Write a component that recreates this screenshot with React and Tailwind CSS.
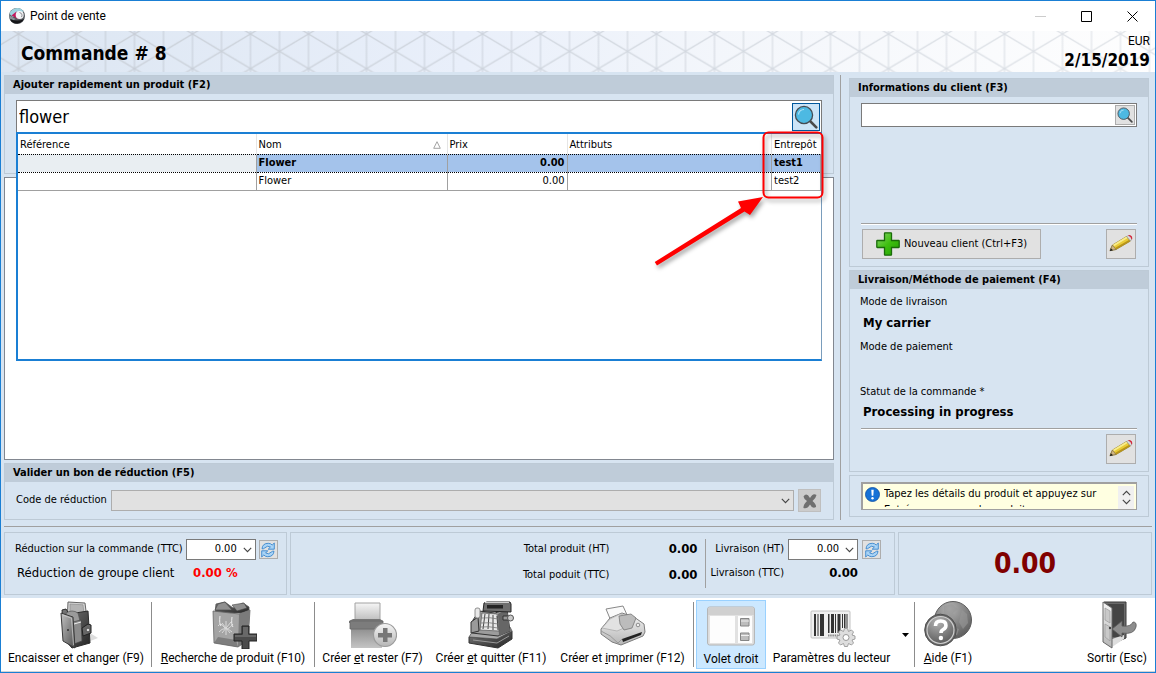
import React from "react";

const SANS = "font-['DejaVu_Sans_Condensed','Liberation_Sans',sans-serif]";
const UI = "font-['Roboto','Noto_Sans',sans-serif]";

function Logo() {
  return (
    <svg className="size-4" viewBox="0 0 16 16" aria-hidden="true">
      <circle cx="8" cy="8" r="8" fill="#55595e" />
      <path d="M.5 6A7.800 7.800 0 0 1 14.500 3.500L8 6 4 9z" fill="#9ed3df" />
      <path d="M.1 7A8 8 0 0 0 3 13.200L6.500 11z" fill="#8b9399" />
      <path d="M2.500 7.500 7.500 3.500 9 11z" fill="#c2185b" />
      <circle cx="10.700" cy="7" r="4" fill="#f3f3f5" />
      <path d="M10.500 4.500a3 3 0 0 1 2 4.600" stroke="#8a8a90" strokeWidth="1" fill="none" />
      <path d="M1.500 11q6.500 3 13.500 0A8 8 0 0 1 1.500 12.500z" fill="#151518" />
    </svg>
  );
}

function HeaderPattern() {
  return (
    <svg className="absolute inset-0 h-full w-full" aria-hidden="true">
      <defs>
        <linearGradient id="hdr">
          <stop offset="0" stopColor="#dce6f2" />
          <stop offset="0.4" stopColor="#e9effa" />
          <stop offset="0.62" stopColor="#f3f6fb" />
          <stop offset="1" stopColor="#fefefe" />
        </linearGradient>
        <linearGradient id="fade">
          <stop offset="0" stopColor="#fff" />
          <stop offset="1" stopColor="#888" />
        </linearGradient>
        <mask id="fadeMask">
          <rect width="100%" height="100%" fill="url(#fade)" />
        </mask>
        <pattern id="tri" width="58" height="34.6" patternUnits="userSpaceOnUse" patternTransform="translate(17.5 3)">
          <path d="M0 0 58 34.600M58 0 0 34.600" stroke="#c8ced6" strokeWidth="1.300" />
          <path d="M29 0V35M0 0V35M58 0V35" stroke="#c3cad3" strokeWidth="1" />
        </pattern>
      </defs>
      <rect width="100%" height="100%" fill="url(#hdr)" />
      <g mask="url(#fadeMask)">
        <rect width="100%" height="100%" fill="url(#tri)" />
      </g>
    </svg>
  );
}

function Magnifier({ className }) {
  return (
    <svg className={className} viewBox="0 0 24 24" aria-hidden="true">
      <path d="m16 16 6.300 6.300" stroke="#4a4a4a" strokeWidth="2.600" strokeLinecap="round" />
      <circle cx="10" cy="10" r="8.600" fill="#4db9e2" stroke="#454b52" strokeWidth="1.300" />
      <path d="M4.500 9.500A5.600 5.600 0 0 1 10 4.500" stroke="#b5e4f7" strokeWidth="1.200" fill="none" />
    </svg>
  );
}

function Plus() {
  return (
    <svg className="size-6" viewBox="0 0 24 24" aria-hidden="true">
      <defs>
        <linearGradient id="plusG" x1="0" y1="0" x2="1" y2="1">
          <stop offset="0" stopColor="#8ad46f" />
          <stop offset="0.5" stopColor="#3fbf10" />
          <stop offset="1" stopColor="#1f9c00" />
        </linearGradient>
      </defs>
      <path d="M9 .8h6q.5 0 .5.500V8.500h7.200q.5 0 .5.500v6q0 .5-.5.500h-7.200v7.200q0 .5-.5.500H9q-.5 0-.5-.5V15.500H1.300q-.5 0-.5-.5V9q0-.5.5-.5h7.200V1.300q0-.5.500-.5z" fill="url(#plusG)" stroke="#1a6b0a" strokeWidth="1.300" />
    </svg>
  );
}

function Pencil() {
  return (
    <svg className="h-5 w-6" viewBox="0 0 24 20" aria-hidden="true">
      <path d="M1 16.500 3.500 11 17.500 2.500 21.500 7 7 15.500z" fill="#e9cb35" stroke="#8f7a2a" strokeWidth=".8" />
      <path d="M3.500 11 17.500 2.500 18.800 4 5 12.300z" fill="#f8ec8c" />
      <path d="M7 15.500 21.500 7 20.300 5.700 6 14z" fill="#b8941a" />
      <path d="M1 16.500 3.500 11 7 15.500z" fill="#cfb583" stroke="#7a6840" strokeWidth=".6" />
      <path d="M.8 17.200 1.900 14.200 4 16.300z" fill="#222" />
      <path d="m17.500 2.500 2-.9q3.500.4 3.500 3.400L21.500 7z" fill="#d9d9d9" stroke="#888" strokeWidth=".5" />
      <path d="m18.900 1.600 1.600-.5q3 .5 2.700 3.500l-1 1.200q.3-3-3.300-4.200z" fill="#d4263c" />
    </svg>
  );
}

function Refresh() {
  return (
    <svg className="size-4" viewBox="0 0 16 16" aria-hidden="true">
      <path d="M2 6.800Q2.500 1.300 8.300 1.300q2.300 0 3.900 1.700L14.300 1v6.200H8.200l2.200-2.200Q7.300 3 4.800 5.900 3.500 7.200 2 6.800z" fill="#a9d3f5" stroke="#2b7cc9" strokeWidth=".8" />
      <path d="M14 9.200Q13.500 14.700 7.700 14.700q-2.300 0-3.900-1.700L1.700 15V8.800h6.100L5.600 11q3.100 2 5.600-.9 1.300-1.300 2.800-.9z" fill="#a9d3f5" stroke="#2b7cc9" strokeWidth=".8" />
    </svg>
  );
}

function Chevron({ className }) {
  return (
    <svg className={className} viewBox="0 0 9 6" aria-hidden="true">
      <path d="m.8.800 3.700 3.900L8.200.800" fill="none" stroke="#444" strokeWidth="1.100" />
    </svg>
  );
}

/* Shared gradients for the grey toolbar drawings */
function Defs() {
  return (
    <svg className="absolute size-0" aria-hidden="true">
      <defs>
        <linearGradient id="g1" x1="0" y1="0" x2="1" y2="1">
          <stop offset="0" stopColor="#c2c2c2" />
          <stop offset="1" stopColor="#505050" />
        </linearGradient>
        <linearGradient id="g2" x1="0" y1="0" x2="0" y2="1">
          <stop offset="0" stopColor="#f6f6f6" />
          <stop offset="1" stopColor="#b5b5b5" />
        </linearGradient>
        <linearGradient id="g3" x1="0" y1="0" x2="1" y2="1">
          <stop offset="0" stopColor="#7a7a7a" />
          <stop offset="1" stopColor="#242424" />
        </linearGradient>
        <radialGradient id="g4" cx=".4" cy=".2" r=".9">
          <stop offset="0" stopColor="#b2b2b2" />
          <stop offset="1" stopColor="#555" />
        </radialGradient>
        <linearGradient id="g5" x1="0" y1="0" x2="0" y2="1">
          <stop offset="0" stopColor="#8e8e8e" />
          <stop offset="1" stopColor="#c4c4c4" />
        </linearGradient>
      </defs>
    </svg>
  );
}

const ICON = "h-12 w-12";

const Wallet = () => (
  <svg className={ICON} viewBox="0 0 48 48" aria-hidden="true">
    <path d="M28 44 46 37 38 32z" fill="#ddd" />
    <path d="m16 1 17 1 2 16-20 4z" fill="#d5d5d5" stroke="#666" />
    <path d="m18 3 13 .8 1 9-14 1z" fill="#b3b3b3" stroke="#888" strokeWidth=".6" />
    <path d="m10 9 4-1 3 5 19-3 2 32-18 5-7-8z" fill="url(#g3)" stroke="#2b2b2b" />
    <path d="M14 12q6-4 12 0l2 8-12 4z" fill="#9a9a9a" stroke="#555" strokeWidth=".7" />
    <path d="m21 21 8-2 1 21-8 3z" fill="#8b8b8b" stroke="#444" strokeWidth=".7" />
    <path d="m22 23 7-2" stroke="#eee" />
    <path d="m9 12 12 4 2 31-12-7z" fill="url(#g1)" stroke="#3a3a3a" />
    <path d="m11 14 8.500 3.200 2 27" stroke="#d2d2d2" strokeWidth=".7" fill="none" />
    <circle cx="16" cy="29" r="1" fill="#333" />
    <path d="m30 27 6-4 3 1v8l-8 3z" fill="#666" stroke="#222" />
    <circle cx="36" cy="29" r="1.800" fill="#ddd" stroke="#333" strokeWidth=".6" />
  </svg>
);

const Bag = () => (
  <svg className={ICON} viewBox="0 0 48 48" aria-hidden="true">
    <path d="m7 3 9-2 8 6 10-5 6 4v6H6z" fill="url(#g3)" stroke="#555" strokeWidth=".8" />
    <path d="m9 3 7-2 7 8H6zM23 4l12-2 3 5-10 3z" fill="#8f8f8f" stroke="#444" strokeWidth=".6" />
    <path d="m4 10 26 3 11-4-2 30-10 7-24-4z" fill="#a4a4a4" stroke="#666" strokeWidth=".8" />
    <path d="m30 13 11-4-2 30-10 7z" fill="#7b7b7b" />
    <path d="m5 42 4-6 18 3 2 7z" fill="#666" opacity=".6" />
    <path d="M9 25q3-4 6 1t9-3M10 31q6-7 13 0M13 22l8 10M22 21l-9 11M17 20v14" stroke="#d9d9d9" strokeWidth="1" fill="none" />
    <path d="M11 15q-1 8 1 10M23 16q-1 8 1 10" stroke="#efefef" strokeWidth="1" fill="none" />
    <path d="M33 25h7v8h8v7h-8v8h-7v-8h-8v-7h8z" fill="#4b4b4b" stroke="#222" />
    <path d="M34 26h5v8h8v2H26v-2h8z" fill="#7b7b7b" opacity=".6" />
  </svg>
);

const SaveStay = () => (
  <svg className={ICON} viewBox="0 0 48 48" aria-hidden="true">
    <path d="M6 2h25v20H6z" fill="url(#g2)" stroke="#a2a2a2" />
    <path d="m0 20 4-2h27l3 2v2H0z" fill="#777" />
    <path d="M2 27h31v20H2z" fill="url(#g5)" />
    <path d="M1 20h33v8H1z" fill="#7c7c7c" stroke="#686868" strokeWidth=".8" />
    <circle cx="36" cy="34" r="11.500" fill="url(#g2)" stroke="#9b9b9b" strokeWidth="1.200" />
    <path d="M34 27h4.500v5H43v4.500h-4.500V41H34v-4.500h-5V32h5z" fill="#777" />
  </svg>
);

const Register = () => (
  <svg className={ICON} viewBox="0 0 48 48" aria-hidden="true">
    <path d="m2 36 28 2 15-8v8L31 47 2 42z" fill="url(#g3)" stroke="#333" />
    <path d="m2 36 5-8 36-2 2 4-15 8z" fill="#a9a9a9" stroke="#555" strokeWidth=".8" />
    <path d="m12 10 16 2 12-4 3 22-12 5-26-3 1-13z" fill="#9c9c9c" stroke="#333" />
    <path d="m31 13 9-5 3 22-11 5z" fill="#666" />
    <path d="m17 2 3-1h23l1 2v8l-28-1z" fill="#6f6f6f" stroke="#252525" />
    <path d="M20 4h16v3.500H20z" fill="#252525" />
    <path d="M18 1.500h24" stroke="#cfcfcf" />
    <path d="m15 12 15 1 2 17-19-1z" fill="#e8e8e8" stroke="#555" strokeWidth=".7" />
    <path d="m18 13-2 15m6-15-1 15m5-14v15m4-14 1 14" stroke="#444" strokeWidth="1" />
    <path d="M15 17q8-1 16 1M14 22q8-1 17 1M13 26q9-1 18 1" stroke="#777" strokeWidth=".8" fill="none" />
    <path d="m4 21 7-5 1 14-8 2z" fill="#9a9a9a" stroke="#333" />
    <rect x="8" y="7" width="5" height="10" rx="2" fill="#e8e8e8" stroke="#777" strokeWidth=".8" />
    <path d="M36 15h8v4h-8z" fill="#999" stroke="#333" />
    <circle cx="43.500" cy="17" r="3" fill="#c9c9c9" stroke="#555" />
    <path d="m6 39 24 3 12-7" stroke="#9a9a9a" fill="none" />
  </svg>
);

const Printer = () => (
  <svg className={ICON} viewBox="0 0 48 48" aria-hidden="true">
    <path d="m7 8 17-3 5 11-17 4z" fill="#fafafa" stroke="#888" />
    <path d="m2 28 9-11 12-5 12 4 10 7 1 8-2 4-22 9-9-3L2 33z" fill="url(#g2)" stroke="#7d7d7d" />
    <path d="m11 18 10-5 12 3-1 8-14 6-15-3z" fill="#e2e2e2" stroke="#a5a5a5" strokeWidth=".7" />
    <path d="m20 15 12-2 5 4-4 10-8 2-4-6z" fill="#bcbcbc" stroke="#777" strokeWidth=".8" />
    <path d="m23 38 20-7-1 3-18 7z" fill="#222" />
    <path d="M2 30q10 4 17 12l4-4" stroke="#999" fill="none" />
    <circle cx="39" cy="24" r="1.800" fill="#eee" stroke="#777" strokeWidth=".8" />
  </svg>
);

const RightPane = () => (
  <svg className={ICON} viewBox="0 0 48 48" aria-hidden="true">
    <rect x=".6" y="5" width="46.800" height="38" rx="2" fill="#e1e1e1" stroke="#b2b2b2" />
    <path d="M1 13V7q0-2 2-2h42q2 0 2 2v6z" fill="#d0d0d0" />
    <path d="M3 14h25v27H3zM31 14h14v27H31z" fill="#fdfdfd" />
    <path d="M33.500 16.500h8.500v7.500h-8.500zM33.500 31h8.500v7.500h-8.500z" fill="#bdbdbd" stroke="#858585" />
    <path d="M34 19h8M34 33.500h8" stroke="#efefef" />
  </svg>
);

const Barcode = () => (
  <svg className={ICON} viewBox="0 0 48 48" aria-hidden="true">
    <rect x="3" y="10" width="39" height="27" rx="1" fill="#f0f0f0" stroke="#c2c2c2" />
    <path d="M6 13h2v22H6zM9.500 13h1v22h-1zM12 13h4v22h-4zM20 13h1.500v19H20zM23 13h3v19h-3zM27 13h1v19h-1zM29.500 13h3v19h-3zM34 13h1v14h-1zM36 13h1.500v14H36zM38.500 13h1v14h-1z" fill="#343434" />
    <path d="M20 34.500h13" stroke="#888" strokeWidth="2" strokeDasharray="1.500 .7" />
    <path d="m35.500 30.500 1-3h3l1 3 3-1.500 2 2-1.500 3 3 1v3l-3 1 1.500 3-2 2-3-1.500-1 3h-3l-1-3-3 1.500-2-2 1.500-3-3-1v-3l3-1-1.500-3 2-2z" fill="#dedede" stroke="#999" strokeWidth=".9" />
    <circle cx="38" cy="36.500" r="3" fill="#fff" stroke="#999" />
  </svg>
);

const Help = () => (
  <svg className={ICON} viewBox="0 0 48 48" aria-hidden="true">
    <circle cx="29" cy="19" r="18.500" fill="url(#g4)" stroke="#5c5c5c" />
    <path d="m20 5 8-2 6 5-5 4 2 5-6 3-5-6zM38 9l5 4 1 9-5 6-4-7zM29 26l6 2-2 6-5-1z" fill="#989898" opacity=".6" />
    <circle cx="16.500" cy="29" r="15.800" fill="#686868" stroke="#4f4f4f" />
    <circle cx="16.500" cy="29" r="13.500" fill="url(#g4)" stroke="#cfcfcf" strokeWidth="1.200" />
    <path d="M11.500 25q0-5 5.200-5t5.200 4.500q0 2.500-2.700 4-2.200 1.200-2.200 3.500" stroke="#fff" strokeWidth="3.600" fill="none" />
    <circle cx="16.900" cy="37" r="2.200" fill="#fff" />
  </svg>
);

const Exit = () => (
  <svg className={ICON} viewBox="0 0 48 48" aria-hidden="true">
    <path d="M11 1h22v36l-14 6z" fill="#6a6a6a" stroke="#3a3a3a" />
    <path d="M14 3h17v33H18z" fill="#454545" />
    <path d="m19 38 12-4v4l-12 8z" fill="#dedede" />
    <path d="m10 1 9 6v40l-9-6z" fill="url(#g2)" stroke="#666" />
    <path d="m12 7 5 3v12l-5-3zM12 23l5 3v14l-5-4z" fill="#c9c9c9" stroke="#999" strokeWidth=".7" />
    <circle cx="17" cy="27" r="1.200" fill="#444" />
    <path d="m19 28 10-8v5q9 1 11-4 4 0 3 5-2 8-14 6v4z" fill="#8d8d8d" stroke="#5b5b5b" strokeWidth=".8" />
  </svg>
);

function Panel({ title, children, className = "" }) {
  return (
    <section className={`flex flex-col border border-[#bdcad6] ${className}`}>
      {title && (
        <h2 className="h-[18px] bg-[#bfccd9] px-2 text-[11px] leading-[18px] font-bold whitespace-nowrap">{title}</h2>
      )}
      {children}
    </section>
  );
}

const SQUARE = "flex shrink-0 items-center justify-center border border-[#adadad] bg-[#e1e1e1]";

function Amount({ id }) {
  return (
    <div className="relative">
      <select id={id} className="block h-[21px] w-[70px] appearance-none border border-[#7a7a7a] bg-white pr-[18px] text-[11px] outline-none [text-align-last:right]">
        <option>0.00</option>
      </select>
      <Chevron className="pointer-events-none absolute top-2 right-1 h-[6px] w-[9px]" />
    </div>
  );
}

const Rule = () => <div className="h-[2px] border-t border-[#a0a0a0] bg-white" />;

function Tool({ icon, children, className = "" }) {
  return (
    <button className={`flex shrink-0 flex-col items-center justify-end pb-1 whitespace-nowrap ${className}`}>
      {icon}
      <span className="leading-[18px]">{children}</span>
    </button>
  );
}

const Sep = ({ className = "" }) => <div className={`my-1 w-px shrink-0 bg-[#8c8c8c] ${className}`} />;

const CELL = "border-r border-[#a0a0a0]";
const HEAD = "border-r border-[#e5e5e5] px-[2px] pt-[2px] font-normal";

export default function App() {
  return (
    <div className={`flex min-h-screen flex-col border border-[#1a7fd4] bg-[#d7e4f1] text-[11px] text-black ${SANS}`}>
      <Defs />
      <header className={`flex h-[30px] items-center bg-white pl-2 text-[12px] ${UI}`}>
        <Logo />
        <span className="pl-[5px]">Point de vente</span>
        <div className="ml-auto flex">
          <button aria-label="Réduire" className="flex h-7 w-[46px] items-center justify-center">
            <svg className="size-[11px]" viewBox="0 0 11 11"><path d="M0 5.500h11" stroke="#ccc" /></svg>
          </button>
          <button aria-label="Agrandir" className="flex h-7 w-[46px] items-center justify-center">
            <svg className="size-[11px]" viewBox="0 0 11 11"><path d="M.5.500h10v10H.5z" fill="none" stroke="#000" /></svg>
          </button>
          <button aria-label="Fermer" className="flex h-7 w-[46px] items-center justify-center">
            <svg className="size-[11px]" viewBox="0 0 11 11"><path d="m.5.500 10 10m0-10-10 10" stroke="#000" /></svg>
          </button>
        </div>
      </header>

      <div className="relative flex h-[41px] items-center justify-between pr-[5px] pl-5">
        <HeaderPattern />
        <h1 className="relative pt-1 text-[19px] font-bold">Commande # 8</h1>
        <div className="relative text-right">
          <div className={`text-[12px] leading-4 ${UI}`}>EUR</div>
          <div className="text-[17px] leading-[22px] font-bold">2/15/2019</div>
        </div>
      </div>

      <main className="flex flex-1 pt-[3px] pb-[6px] pl-[3px]">
        <div className="flex min-w-0 flex-1 flex-col gap-[3px]">
          <Panel title="Ajouter rapidement un produit (F2)" className="relative z-10 h-[99px]">
            <div className="relative mt-[6px] mr-[11px] ml-[11px]">
              <div className="flex h-[33px] items-center border border-[#7a7a7a] bg-white pr-px">
                <input aria-label="Produit" defaultValue="flower" className="h-full min-w-0 flex-1 bg-transparent px-[2px] text-[18px] outline-none" />
                <button aria-label="Rechercher" className="flex size-7 items-center justify-center border border-[#00579c] bg-[#cce4f7]">
                  <Magnifier className="size-6" />
                </button>
              </div>
              <div className="absolute top-8 right-0 left-0 h-[229px] border-2 border-r border-[#1a7fd4] border-r-[#7a9dbc] bg-white">
                <table className="w-full table-fixed border-collapse">
                  <colgroup>
                    <col className="w-[238px]" />
                    <col className="w-[191px]" />
                    <col className="w-[120px]" />
                    <col />
                    <col className="w-[49px]" />
                  </colgroup>
                  <thead>
                    <tr className="h-5 text-left">
                      <th className={HEAD}>Référence</th>
                      <th className={HEAD}>
                        <div className="flex items-center justify-between pr-1">
                          Nom
                          <svg className="size-2" viewBox="0 0 8 8" aria-hidden="true"><path d="M4 .7 7.300 7.300H.7z" fill="#fff" stroke="#999" strokeWidth=".9" /></svg>
                        </div>
                      </th>
                      <th className={HEAD}>Prix</th>
                      <th className={HEAD}>Attributs</th>
                      <th className="px-[2px] pt-[2px] font-normal">Entrepôt</th>
                    </tr>
                  </thead>
                  <tbody>
                    <tr className="h-[18px] border-y border-dotted border-black bg-[#a4c3eb] font-bold">
                      <td className={`bg-[#e9eef2] ${CELL}`} />
                      <td className={`px-[2px] ${CELL}`}>Flower</td>
                      <td className={`px-[2px] text-right ${CELL}`}>0.00</td>
                      <td className={CELL} />
                      <td className="border-r border-r-[#a0a0a0] px-[2px]">test1</td>
                    </tr>
                    <tr className="h-[18px] border-b border-[#a0a0a0]">
                      <td className={CELL} />
                      <td className={`px-[2px] ${CELL}`}>Flower</td>
                      <td className={`px-[2px] text-right ${CELL}`}>0.00</td>
                      <td className={CELL} />
                      <td className={`px-[2px] ${CELL}`}>test2</td>
                    </tr>
                  </tbody>
                </table>
                <svg className="pointer-events-none absolute -top-[3px] -right-[3px] h-[140px] w-[176px] overflow-visible drop-shadow-[2px_3px_2px_rgba(0,0,0,0.35)]" viewBox="0 0 176 140" aria-hidden="true">
                  <rect x="115.500" y="1.500" width="59" height="65" rx="5" fill="none" stroke="#f00" strokeWidth="2" />
                  <path d="M6.700 131 93 77 90 70.500 115 66 102 84 96.500 80.500 9 134.500z" fill="#f00" />
                </svg>
              </div>
            </div>
          </Panel>
          <div className="flex-1 border border-[#828790] bg-white" />
          <Panel title="Valider un bon de réduction (F5)">
            <div className="flex h-[37px] items-center pr-3 pl-[11px]">
              <label htmlFor="code" className="whitespace-nowrap">Code de réduction</label>
              <div className="relative mr-1 ml-1 flex-1">
                <select id="code" disabled className="block h-[21px] w-full appearance-none border border-[#adadad] bg-[#e1e1e1]" />
                <Chevron className="absolute top-2 right-1 h-[6px] w-[9px]" />
              </div>
              <button aria-label="Effacer" disabled className="flex size-[23px] shrink-0 items-center justify-center border border-[#bfbfbf] bg-[#cccccc]">
                <svg className="size-4" viewBox="0 0 16 16" aria-hidden="true">
                  <path d="M1.500 3.500Q4.500-1 8 5q3-5.500 6.500-3Q14 5 10.500 8q4 3.500 3.500 6-3.500 2.500-6-2.500-3 5-6.500 3.500-.5-3 3.500-7Q2 6.500 1.500 3.500z" fill="#6f6f6f" />
                </svg>
              </button>
            </div>
          </Panel>
        </div>
        <div className="ml-[6px] w-px bg-[#a0a0a0]" />
        <div className="mt-[3px] mr-[6px] ml-2 flex w-[300px] shrink-0 flex-col gap-[3px]">
          <Panel title="Informations du client (F3)">
            <div className="flex flex-col px-[11px] pt-[6px] pb-[7px]">
              <div className="flex h-6 items-center border border-[#7a7a7a] bg-white pr-px">
                <input aria-label="Client" className="h-full min-w-0 flex-1 bg-transparent px-[2px] outline-none" />
                <button aria-label="Rechercher un client" className={`size-5 ${SQUARE}`}>
                  <Magnifier className="size-4" />
                </button>
              </div>
              <div className="h-24" />
              <Rule />
              <div className="flex items-center justify-between px-px pt-1">
                <button className={`h-[30px] w-[179px] gap-1 ${SQUARE}`}>
                  <Plus />
                  Nouveau client (Ctrl+F3)
                </button>
                <button aria-label="Modifier le client" className={`size-[30px] ${SQUARE}`}><Pencil /></button>
              </div>
            </div>
          </Panel>
          <Panel title="Livraison/Méthode de paiement (F4)">
            <dl className="flex flex-col px-[10px] pt-[5px]">
              <dt className="leading-4">Mode de livraison</dt>
              <dd className="h-7 px-[3px] pt-[3px] text-[13px] leading-5 font-bold">My carrier</dd>
              <dt className="leading-[18px]">Mode de paiement</dt>
              <dd className="h-[26px]" />
              <dt className="leading-5">Statut de la commande *</dt>
              <dd className="h-6 px-[3px] text-[13px] leading-5 font-bold">Processing in progress</dd>
            </dl>
            <div className="px-[11px] pt-[2px] pb-[7px]">
              <Rule />
              <div className="flex justify-end px-px pt-1">
                <button aria-label="Modifier la livraison" className={`size-[30px] ${SQUARE}`}><Pencil /></button>
              </div>
            </div>
          </Panel>
          <Panel>
            <div className="mx-[11px] my-[6px] flex h-7 gap-1 overflow-hidden border-2 border-r border-b border-[#a0a0a0] bg-[#ffffe1] pt-[2px] pr-[2px] pl-[2px]">
              <svg className="mt-px size-[15px] shrink-0" viewBox="0 0 15 15" aria-hidden="true">
                <circle cx="7.500" cy="7.500" r="7" fill="#1672d6" stroke="#0b4da2" strokeWidth=".8" />
                <path d="M6.300 2.800h2.400l-.4 6H6.700z" fill="#fff" />
                <circle cx="7.500" cy="11.200" r="1.200" fill="#fff" />
              </svg>
              <p className="h-[21px] min-w-0 flex-1 overflow-hidden leading-4">Tapez les détails du produit et appuyez sur<br />Entrée ou scannez le produit</p>
              <div className="flex w-4 flex-col items-center justify-between bg-[#f0f0f0] py-1">
                <Chevron className="h-[6px] w-[9px] rotate-180" />
                <Chevron className="h-[6px] w-[9px]" />
              </div>
            </div>
          </Panel>
        </div>
      </main>

      <div className="mr-[3px] ml-[3px] border-t border-[#a0a0a0]" />
      <div className="flex gap-[3px] px-[3px] pt-[5px] pb-[3px]">
        <Panel className="min-h-[63px] w-[283px] shrink-0">
          <div className="flex items-center gap-[3px] pt-[6px] pl-[10px]">
            <label htmlFor="remise" className="whitespace-nowrap">Réduction sur la commande (TTC)</label>
            <Amount id="remise" />
            <button aria-label="Recalculer la réduction" className={`size-[19px] ${SQUARE}`}><Refresh /></button>
          </div>
          <div className="flex items-center pt-[3px] pl-3 text-[13px] leading-5">
            <span className="w-44">Réduction de groupe client</span>
            <span className="font-bold text-[#f00]">0.00 %</span>
          </div>
        </Panel>
        <Panel className="min-w-0 flex-1">
          <div className="flex justify-end gap-2 py-[6px] pr-3">
            <dl className="grid grid-cols-[auto_88px] content-start items-center gap-y-[6px] text-right leading-5">
              <dt>Total produit (HT)</dt>
              <dd className="text-[13px] font-bold">0.00</dd>
              <dt>Total poduit (TTC)</dt>
              <dd className="text-[13px] font-bold">0.00</dd>
            </dl>
            <div className="h-[49px] w-px bg-[#a0a0a0]" />
            <div className="-ml-1 grid grid-cols-[auto_70px_20px] content-start items-center gap-x-1 gap-y-[3px] text-right">
              <label htmlFor="port">Livraison (HT)</label>
              <Amount id="port" />
              <button aria-label="Recalculer la livraison" className={`size-[19px] ${SQUARE}`}><Refresh /></button>
              <span>Livraison (TTC)</span>
              <span className="text-[13px] leading-5 font-bold">0.00</span>
            </div>
          </div>
        </Panel>
        <Panel className="w-[254px] shrink-0 items-center justify-center">
          <output className="text-[28px] leading-8 font-bold text-[#800000]">0.00</output>
        </Panel>
      </div>

      <nav className={`flex h-[74px] border-b border-[#d4d4d4] bg-white text-[12px] ${UI}`}>
        <Tool icon={<Wallet />} className="w-[150px]">Encaisser et changer (F9)</Tool>
        <Sep />
        <Tool icon={<Bag />} className="w-[162px]"><u>R</u>echerche de produit (F10)</Tool>
        <Sep />
        <Tool icon={<SaveStay />} className="w-[115px]">Créer <u>e</u>t rester (F7)</Tool>
        <Tool icon={<Register />} className="w-[122px]">Créer <u>e</u>t quitter (F11)</Tool>
        <Tool icon={<Printer />} className="w-[141px]">Créer et <u>i</u>mprimer (F12)</Tool>
        <Sep className="mr-[2px]" />
        <Tool icon={<RightPane />} className="my-[2px] w-[70px] border border-[#99d1ff] bg-[#cce8ff] pb-0!">Volet droit</Tool>
        <Tool icon={<Barcode />} className="w-[131px]">Paramètres du lecteur</Tool>
        <button aria-label="Options du lecteur" className="flex w-[17px] items-center justify-center">
          <svg className="h-1 w-[7px]" viewBox="0 0 7 4"><path d="M0 0h7L3.500 4z" /></svg>
        </button>
        <Sep />
        <Tool icon={<Help />} className="w-[66px]"><u>A</u>ide (F1)</Tool>
        <Tool icon={<Exit />} className="ml-auto w-[76px]">Sortir (Esc)</Tool>
      </nav>
    </div>
  );
}
